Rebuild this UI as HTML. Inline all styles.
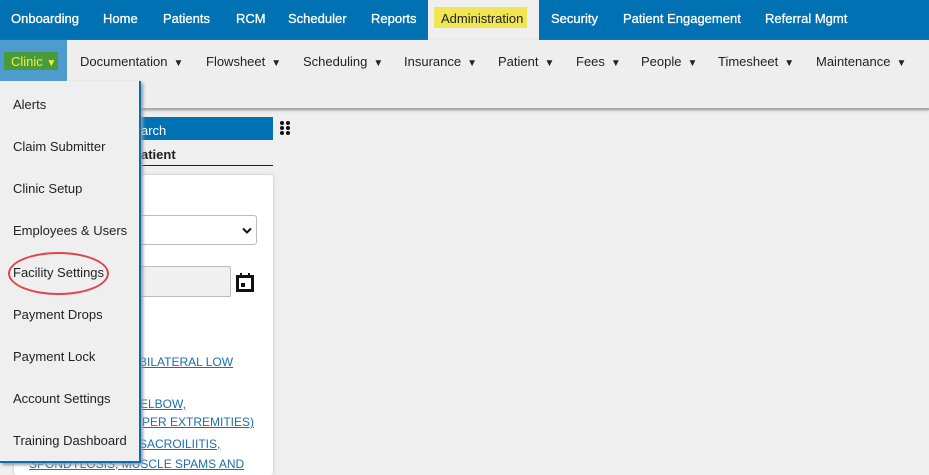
<!DOCTYPE html><html><head><style>
*{margin:0;padding:0;box-sizing:border-box}
body{width:929px;height:473px;overflow:hidden;background:#efefef;font-family:"Liberation Sans",sans-serif;font-size:13px;position:relative}
.top{position:absolute;left:0;top:0;width:929px;height:40px;background:#0071b2}
.top span{position:absolute;top:11px;color:#fff;font-size:13px;-webkit-text-stroke:0.3px #fff}
.admin{position:absolute;left:428px;top:0;width:111px;height:40px;background:#efefef}
.admin i{position:absolute;left:6px;top:7px;width:93px;height:21px;background:#efe651}
.admin b{position:absolute;left:13px;top:11px;font-weight:normal;color:#222}
.sub{position:absolute;left:0;top:40px;width:929px;height:70px;background:#eee;border-bottom:2px solid #aaa;box-shadow:0 1px 2px #bbb}
.sub span{position:absolute;top:14px;color:#222}
.sub em{font-style:normal;font-size:10px;margin-left:6px}
.clinicbg{position:absolute;left:0;top:40px;width:67px;height:41px;background:#4e9ccd}
.clinic{position:absolute;left:4px;top:52px;width:54px;height:18px;background:#4a9a3a;color:#f3ec4a;padding:2px 0 0 7px}
.menu{position:absolute;left:0;top:81px;width:141px;height:382px;background:#efefef;border:2px solid #0a6fae;border-left:none;border-top:none;box-shadow:2px 2px 3px #999}
.menu div{position:absolute;left:13px;color:#222}
.hdr{position:absolute;left:141px;top:117px;width:132px;height:23px;background:#0071b2;color:#fff;padding:6px 0 0 0}
.card{position:absolute;left:14px;top:175px;width:259px;height:300px;background:#fff;border-radius:3px;box-shadow:0 0 3px #bbb}
a{color:#1a6fb0;text-decoration:underline;position:absolute;font-size:12px;white-space:nowrap}
</style></head><body>
<div class="top">
<span style="left:11px">Onboarding</span><span style="left:103px">Home</span><span style="left:163px">Patients</span><span style="left:236px">RCM</span><span style="left:288px">Scheduler</span><span style="left:371px">Reports</span>
<span style="left:551px">Security</span><span style="left:623px">Patient Engagement</span><span style="left:765px">Referral Mgmt</span>
</div>
<div class="admin"><i></i><b>Administration</b></div>
<div class="sub">
<span style="left:80px">Documentation<em>▼</em></span><span style="left:206px">Flowsheet<em>▼</em></span><span style="left:303px">Scheduling<em>▼</em></span><span style="left:404px">Insurance<em>▼</em></span><span style="left:498px">Patient<em>▼</em></span><span style="left:576px">Fees<em>▼</em></span><span style="left:641px">People<em>▼</em></span><span style="left:718px">Timesheet<em>▼</em></span><span style="left:816px">Maintenance<em>▼</em></span>
</div>
<div class="clinicbg"></div>
<div class="clinic">Clinic <span style="font-size:10px">▼</span></div>
<div class="hdr">arch</div>
<div style="position:absolute;left:141px;top:147px;font-weight:bold;color:#222">atient</div>
<div style="position:absolute;left:141px;top:165px;width:132px;height:1px;background:#222"></div>
<svg style="position:absolute;left:279px;top:120px" width="12" height="16"><g fill="#111"><circle cx="3" cy="3" r="2"/><circle cx="9" cy="3" r="2"/><circle cx="3" cy="8" r="2"/><circle cx="9" cy="8" r="2"/><circle cx="3" cy="13" r="2"/><circle cx="9" cy="13" r="2"/></g></svg>
<div class="card">
<div style="position:absolute;left:100px;top:40px;width:143px;height:30px;border:1px solid #bbb;border-radius:3px;background:#fff"><svg style="position:absolute;right:4px;top:11px" width="10" height="7"><path d="M1 1.5L5 5.5L9 1.5" fill="none" stroke="#111" stroke-width="2"/></svg></div>
<div style="position:absolute;left:100px;top:91px;width:117px;height:31px;border:1px solid #bbb;border-radius:2px;background:#f0f0f0"></div>
<svg style="position:absolute;left:222px;top:98px" width="18" height="19"><rect x="1.5" y="3.5" width="15" height="14" fill="none" stroke="#111" stroke-width="3"/><rect x="4" y="0" width="2" height="4" fill="#111"/><rect x="12" y="0" width="2" height="4" fill="#111"/><rect x="5" y="10" width="4" height="4" fill="#111"/></svg>
<a style="left:125px;top:180px">BILATERAL LOW</a>
<a style="left:126px;top:222px">ELBOW,</a>
<a style="left:128px;top:240px">PER EXTREMITIES)</a>
<a style="left:125px;top:262px">SACROILIITIS,</a>
<a style="left:15px;top:282px">SPONDYLOSIS, MUSCLE SPAMS AND</a>
</div>
<div class="menu">
<div style="top:16px">Alerts</div><div style="top:58px">Claim Submitter</div><div style="top:100px">Clinic Setup</div><div style="top:142px">Employees &amp; Users</div><div style="top:184px">Facility Settings</div><div style="top:226px">Payment Drops</div><div style="top:268px">Payment Lock</div><div style="top:310px">Account Settings</div><div style="top:352px">Training Dashboard</div>
</div>
<div style="position:absolute;left:8px;top:252px;width:101px;height:43px;border:2px solid #e0454a;border-radius:50%"></div>
</body></html>
